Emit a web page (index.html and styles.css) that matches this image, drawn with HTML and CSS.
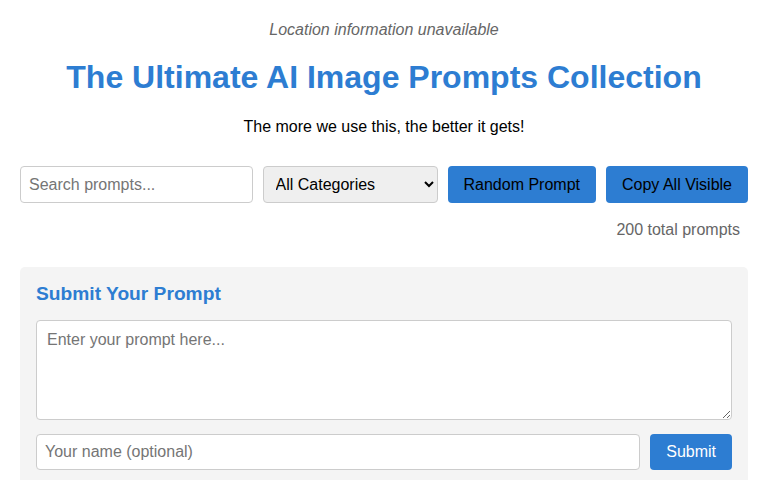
FILE: index.html
```html
<!DOCTYPE html>
<html lang="en">
<head>
  <meta charset="UTF-8">
  <meta name="viewport" content="width=device-width, initial-scale=1">
  <title>AI Image Prompts Collection</title>
  <link rel="stylesheet" href="styles.css">
</head>
<body>
  <div class="container">
    <!-- HEADER -->
    <p class="location">Location information unavailable</p>
    <h1>The Ultimate AI Image Prompts Collection</h1>
    <p class="tagline">The more we use this, the better it gets!</p>

    <!-- CONTROLS -->
    <div class="controls">
      <input type="text" class="search" placeholder="Search prompts...">
      <select class="category">
        <option>All Categories</option>
        <option>Landscapes</option>
        <option>Portraits</option>
      </select>
      <button class="btn">Random Prompt</button>
      <button class="btn">Copy All Visible</button>
    </div>
    <div class="count">200 total prompts</div>

    <!-- SUBMIT FORM -->
    <div class="submit-panel">
      <h3>Submit Your Prompt</h3>
      <textarea class="prompt-input" placeholder="Enter your prompt here..."></textarea>
      <div class="submit-row">
        <input type="text" class="name-input" placeholder="Your name (optional)">
        <button class="btn btn-submit">Submit</button>
      </div>
    </div>
  </div>
</body>
</html>
```

FILE: styles.css
```css
* {
  box-sizing: border-box;
}

body {
  margin: 0;
  font-family: "Liberation Sans", Arial, sans-serif;
  color: #000;
  background: #fff;
}

.container {
  padding: 21px 20px 20px;
}

.location {
  margin: 0;
  text-align: center;
  font-style: italic;
  color: #666;
  font-size: 16px;
  line-height: 18px;
}

h1 {
  margin: 20px 0 22px;
  text-align: center;
  color: #2d7dd2;
  font-size: 32px;
  line-height: 37px;
}

.tagline {
  margin: 0 0 30px;
  text-align: center;
  font-size: 16px;
  line-height: 18px;
}

/* CONTROLS */
.controls {
  display: flex;
  gap: 10px;
}

.search,
.category,
.name-input,
.prompt-input {
  font-family: inherit;
  font-size: 16px;
  border: 1px solid #ccc;
  border-radius: 4px;
  background: #fff;
  color: #000;
}

.search {
  flex: 1;
  height: 37px;
  padding: 0 8px;
}

.category {
  width: 175px;
  height: 37px;
  padding: 0 8px;
  background: #efefef;
}

.btn {
  height: 37px;
  padding: 0 16px;
  border: none;
  border-radius: 4px;
  background: #2d7dd2;
  color: #000;
  font-family: inherit;
  font-size: 16px;
  cursor: pointer;
}

.count {
  margin: 18px 0 28px;
  padding-right: 8px;
  text-align: right;
  color: #666;
  font-size: 16px;
  line-height: 18px;
}

/* SUBMIT FORM */
.submit-panel {
  background: #f4f4f4;
  border-radius: 5px;
  padding: 16px;
}

.submit-panel h3 {
  margin: 0 0 15px;
  color: #2d7dd2;
  font-size: 19.2px;
  line-height: 22px;
}

.prompt-input {
  display: block;
  width: 100%;
  height: 100px;
  padding: 10px;
  resize: vertical;
}

.submit-row {
  display: flex;
  gap: 10px;
  margin-top: 14px;
}

.name-input {
  flex: 1;
  height: 36px;
  padding: 0 8px;
}

.btn-submit {
  height: 36px;
  color: #fff;
}
```
